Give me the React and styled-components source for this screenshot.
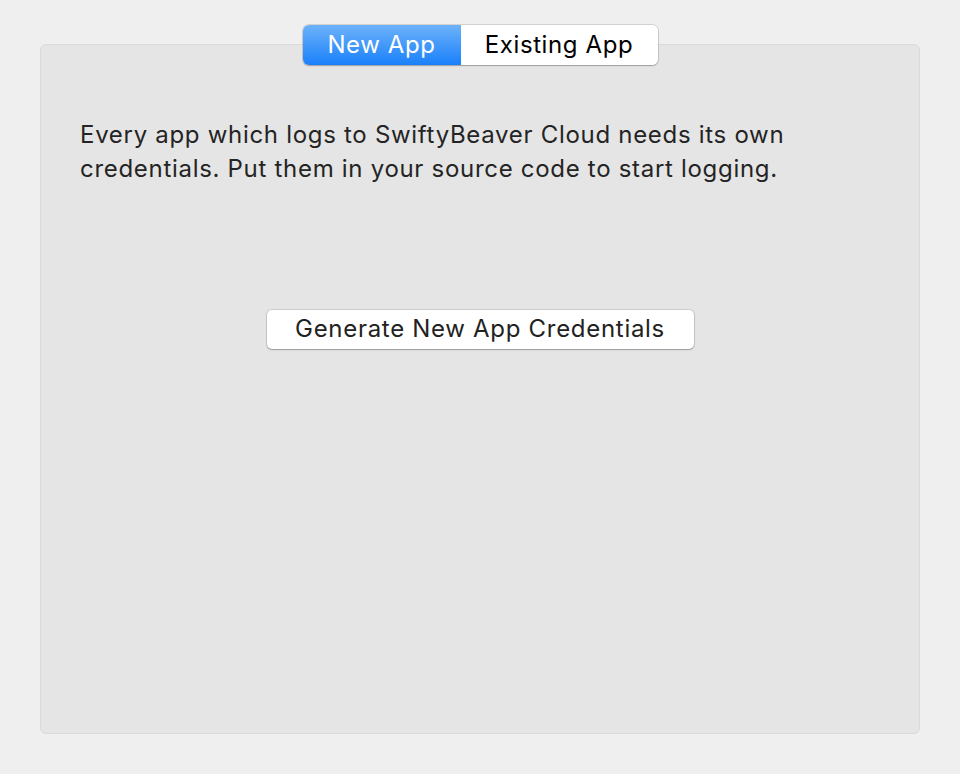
import React, { useState } from 'react';
import styled, { createGlobalStyle } from 'styled-components';

const GlobalStyle = createGlobalStyle`
  body {
    margin: 0;
    background: #efefef;
    font-family: Inter, "Noto Sans", "Liberation Sans", sans-serif;
  }
`;

const Page = styled.div`
  display: flex;
  flex-direction: column;
  align-items: center;
  padding: 25px 40px 40px;
  width: 960px;
  height: 774px;
  box-sizing: border-box;
`;

const Segmented = styled.div`
  position: relative;
  z-index: 1;
  display: flex;
  height: 40px;
  border-radius: 6px;
  background: #fff;
  box-shadow: 0 0 0 1px rgba(0, 0, 0, 0.12), 0 1px 1.5px rgba(0, 0, 0, 0.22);
  overflow: hidden;
`;

const Segment = styled.button`
  width: ${p => p.$width}px;
  border: none;
  padding: 0 0 2px;
  margin: 0;
  font-family: inherit;
  font-size: 24px;
  letter-spacing: 0.6px;
  cursor: default;
  color: ${p => (p.$active ? '#fff' : '#000')};
  background: ${p => (p.$active ? 'linear-gradient(#6cb2f9, #1a80fb)' : '#fff')};
`;

const Panel = styled.div`
  align-self: stretch;
  flex: 1;
  margin-top: -21px;
  background: #e5e5e5;
  border: 1px solid #dadada;
  border-radius: 6px;
  padding: 73px 39px 0;
  display: flex;
  flex-direction: column;
  align-items: center;
`;

const Text = styled.p`
  align-self: stretch;
  margin: 0;
  font-size: 24px;
  line-height: 34px;
  letter-spacing: 0.7px;
  color: #242424;
  white-space: nowrap;
`;

const PushButton = styled.button`
  margin-top: 124px;
  width: 427px;
  height: 39px;
  padding: 0 0 2px;
  background: #fff;
  border: none;
  border-radius: 5px;
  box-shadow: 0 0 0 1px rgba(0, 0, 0, 0.1), 0 1px 1.5px rgba(0, 0, 0, 0.25);
  font-family: inherit;
  font-size: 24px;
  letter-spacing: 0.7px;
  color: #222;
  cursor: default;
`;

export default function App() {
  const [tab, setTab] = useState('new');
  return (
    <>
      <GlobalStyle />
      <Page>
        <Segmented>
          <Segment $width={158} $active={tab === 'new'} onClick={() => setTab('new')}>
            New App
          </Segment>
          <Segment $width={197} $active={tab === 'existing'} onClick={() => setTab('existing')}>
            Existing App
          </Segment>
        </Segmented>
        <Panel>
          <Text>
            Every app which logs to SwiftyBeaver Cloud needs its own
            <br />
            credentials. Put them in your source code to start logging.
          </Text>
          <PushButton>Generate New App Credentials</PushButton>
        </Panel>
      </Page>
    </>
  );
}
